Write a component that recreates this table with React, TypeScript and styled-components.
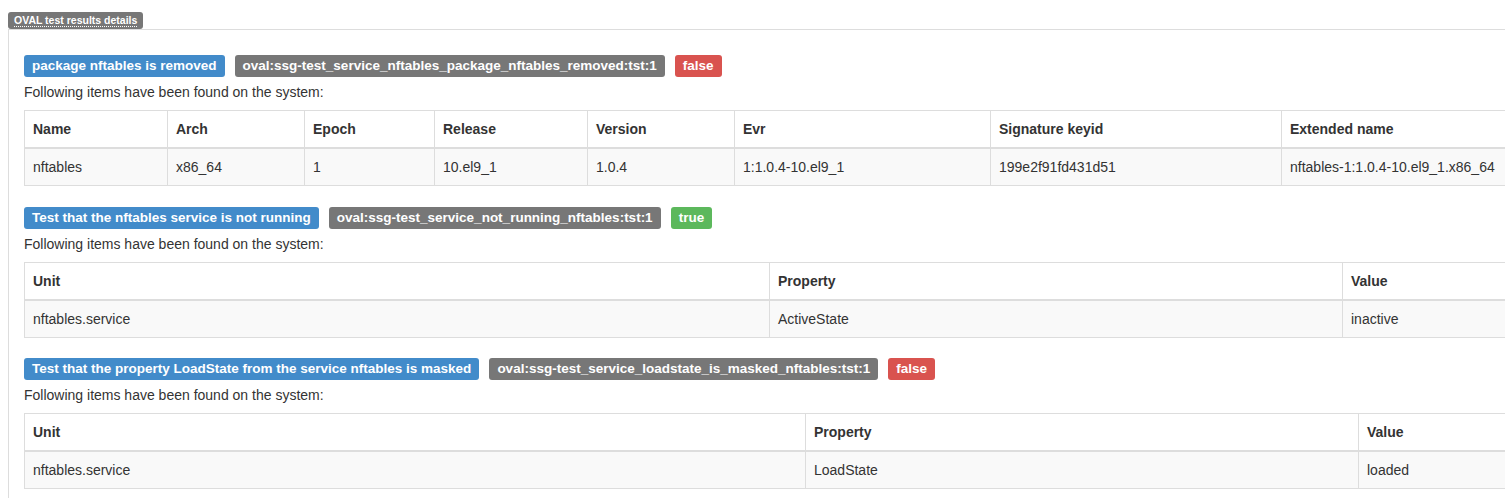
import React from "react";
import styled, { createGlobalStyle } from "styled-components";

const GlobalStyle = createGlobalStyle`
  html {
    margin: 0;
    padding: 0;
    background: #fff;
  }
  body {
    margin: 8px 0 0 8px;
    overflow: hidden;
    font-family: "Liberation Sans", Arial, Helvetica, sans-serif;
    font-size: 14px;
    line-height: 20px;
    color: #333;
  }
`;

const Wrapper = styled.div`
  overflow: hidden;
  padding-top: 4px;
`;

const Inner = styled.div`
  width: 1540px;
`;

const Legend = styled.div`
  display: flex;
`;

const LegendLabel = styled.span`
  display: inline-block;
  background: #777;
  color: #fff;
  font-weight: bold;
  font-size: 10.5px;
  line-height: 12px;
  padding: 2px 6px 3px 6px;
  border-radius: 3px;
`;

const Abbr = styled.abbr`
  text-decoration: underline dotted;
  text-underline-offset: 2px;
  cursor: help;
`;

const Panel = styled.div`
  border: 1px solid #ddd;
  padding: 25px 15px 0 15px;
`;

const Section = styled.section`
  display: flex;
  flex-direction: column;
  margin-bottom: 20.5px;
`;

const LabelRow = styled.div`
  display: flex;
  gap: 10px;
  height: 22px;
`;

type Tone = "primary" | "default" | "danger" | "success";
const toneColors: Record<Tone, string> = {
  primary: "#428bca",
  default: "#777777",
  danger: "#d9534f",
  success: "#5cb85c",
};

const Label = styled.span<{ $tone: Tone }>`
  display: inline-block;
  background: ${(p) => toneColors[p.$tone]};
  color: #fff;
  font-weight: bold;
  font-size: 13.5px;
  line-height: 15px;
  padding: 3px 8px 4px 8px;
  border-radius: 3px;
  white-space: nowrap;
`;

const Desc = styled.p`
  margin: 5px 0 8px 0;
  line-height: 20px;
`;

const Table = styled.table`
  width: 1508px;
  table-layout: fixed;
  border-collapse: collapse;
  border: 1px solid #ddd;
`;

const Col = styled.col<{ $w?: number }>`
  width: ${(p) => (p.$w ? `${p.$w}px` : "auto")};
`;

const Th = styled.th`
  text-align: left;
  font-weight: bold;
  padding: 8px;
  line-height: 20px;
  border: 1px solid #ddd;
  border-bottom: 2px solid #ddd;
  white-space: nowrap;
`;

const Td = styled.td`
  padding: 8px;
  line-height: 20px;
  border: 1px solid #ddd;
  background: #f9f9f9;
  white-space: nowrap;
`;

type Result = {
  title: string;
  id: string;
  result: "true" | "false";
  columns: { name: string; w?: number }[];
  row: string[];
};

const results: Result[] = [
  {
    title: "package nftables is removed",
    id: "oval:ssg-test_service_nftables_package_nftables_removed:tst:1",
    result: "false",
    columns: [
      { name: "Name", w: 143 },
      { name: "Arch", w: 137 },
      { name: "Epoch", w: 130 },
      { name: "Release", w: 153 },
      { name: "Version", w: 147 },
      { name: "Evr", w: 256 },
      { name: "Signature keyid", w: 291 },
      { name: "Extended name" },
    ],
    row: [
      "nftables",
      "x86_64",
      "1",
      "10.el9_1",
      "1.0.4",
      "1:1.0.4-10.el9_1",
      "199e2f91fd431d51",
      "nftables-1:1.0.4-10.el9_1.x86_64",
    ],
  },
  {
    title: "Test that the nftables service is not running",
    id: "oval:ssg-test_service_not_running_nftables:tst:1",
    result: "true",
    columns: [{ name: "Unit", w: 745 }, { name: "Property", w: 573 }, { name: "Value" }],
    row: ["nftables.service", "ActiveState", "inactive"],
  },
  {
    title: "Test that the property LoadState from the service nftables is masked",
    id: "oval:ssg-test_service_loadstate_is_masked_nftables:tst:1",
    result: "false",
    columns: [{ name: "Unit", w: 781 }, { name: "Property", w: 553 }, { name: "Value" }],
    row: ["nftables.service", "LoadState", "loaded"],
  },
];

export default function App() {
  return (
    <>
      <GlobalStyle />
      <Wrapper>
        <Inner>
          <Legend>
            <LegendLabel>
              <Abbr title="OVAL test results details">OVAL test results details</Abbr>
            </LegendLabel>
          </Legend>
          <Panel>
            {results.map((r) => (
              <Section key={r.id}>
                <LabelRow>
                  <Label $tone="primary">{r.title}</Label>
                  <Label $tone="default">{r.id}</Label>
                  <Label $tone={r.result === "true" ? "success" : "danger"}>{r.result}</Label>
                </LabelRow>
                <Desc>Following items have been found on the system:</Desc>
                <Table>
                  <colgroup>
                    {r.columns.map((c) => (
                      <Col key={c.name} $w={c.w} />
                    ))}
                  </colgroup>
                  <thead>
                    <tr>
                      {r.columns.map((c) => (
                        <Th key={c.name}>{c.name}</Th>
                      ))}
                    </tr>
                  </thead>
                  <tbody>
                    <tr>
                      {r.row.map((v, i) => (
                        <Td key={i}>{v}</Td>
                      ))}
                    </tr>
                  </tbody>
                </Table>
              </Section>
            ))}
          </Panel>
        </Inner>
      </Wrapper>
    </>
  );
}
